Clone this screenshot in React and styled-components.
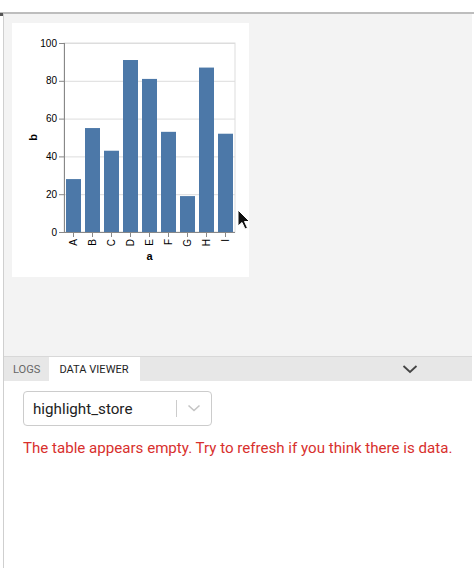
import React from "react";
import styled, { createGlobalStyle } from "styled-components";

const GlobalStyle = createGlobalStyle`
  html, body { margin: 0; padding: 0; background: #fff; }
  body { font-family: Roboto, "Liberation Sans", sans-serif; }
  #root { height: 568px; }
`;

const Page = styled.div`
  height: 568px;
  padding-top: 12px;
  box-sizing: border-box;
  display: flex;
  flex-direction: column;
  position: relative;
`;

const Frame = styled.div`
  flex: 1;
  display: flex;
  flex-direction: column;
  border-top: 2px solid #bdbdbd;
  min-height: 0;
`;

const Corner = styled.div`
  position: absolute;
  left: 0;
  top: 13px;
  width: 3px;
  height: 3px;
  background: #555;
`;

const Body = styled.div`
  flex: 1;
  display: flex;
  flex-direction: column;
  margin: 0 2px 0 3px;
  border-left: 1px solid #cfcfcf;
`;

const Stage = styled.div`
  height: 343px;
  background: #f3f3f3;
  padding: 9px 0 0 8px;
  box-sizing: border-box;
  border-bottom: 1px solid #d8d8d8;
`;

const ChartCard = styled.div`
  position: relative;
  width: 237px;
  height: 254px;
  background: #fff;
`;

const Cursor = styled.svg`
  position: absolute;
  left: 225px;
  top: 186px;
`;

const TabBar = styled.div`
  height: 24px;
  background: #e7e7e7;
  display: flex;
  align-items: stretch;
`;

const Tab = styled.div`
  display: flex;
  align-items: center;
  padding: 0 ${(p) => (p.$active ? "11px 0 10px" : "9px 0 9px")};
  font-size: 11.1px;
  text-transform: uppercase;
  color: ${(p) => (p.$active ? "#1f1f1f" : "#666")};
  background: ${(p) => (p.$active ? "#fff" : "transparent")};
`;

const Collapse = styled.div`
  margin-left: auto;
  padding-right: 54px;
  display: flex;
  align-items: center;
`;

const Content = styled.div`
  flex: 1;
  background: #fff;
  padding: 10px 19px;
`;

const Select = styled.div`
  width: 189px;
  height: 35px;
  box-sizing: border-box;
  border: 1px solid #cccccc;
  border-radius: 4px;
  display: flex;
  align-items: center;
`;

const SelectValue = styled.div`
  flex: 1;
  padding-left: 9px;
  font-size: 15.2px;
  color: #222;
`;

const Separator = styled.div`
  width: 1px;
  align-self: stretch;
  margin: 8px 0;
  background: #cccccc;
`;

const Indicator = styled.div`
  width: 34px;
  display: flex;
  align-items: center;
  justify-content: center;
`;

const ErrorText = styled.div`
  margin-top: 13px;
  font-size: 15.1px;
  white-space: nowrap;
  color: #d8302d;
`;

const data = [
  ["A", 28], ["B", 55], ["C", 43], ["D", 91], ["E", 81],
  ["F", 53], ["G", 19], ["H", 87], ["I", 52],
];

const PX = 52;
const PY = 20;
const PW = 171;
const PH = 189;

const BarChart = () => {
  const y = (v) => PY + PH - (v / 100) * PH;
  return (
    <svg width="237" height="254" fontFamily="'Liberation Sans', Arial, sans-serif">
      <rect x={PX} y={PY} width={PW} height={PH} fill="none" stroke="#ddd" />
      {[0, 20, 40, 60, 80, 100].map((t) => (
        <g key={t}>
          <line x1={PX} x2={PX + PW} y1={y(t) + 0.5} y2={y(t) + 0.5} stroke="#ddd" />
          <line x1={PX - 5} x2={PX} y1={y(t) + 0.5} y2={y(t) + 0.5} stroke="#888" />
          <text x={PX - 7} y={y(t) + 3.5} fontSize="10" textAnchor="end" fill="#000">
            {t}
          </text>
        </g>
      ))}
      {data.map(([k, v], i) => (
        <rect key={k} x={PX + 2 + i * 19} y={y(v)} width="15" height={PY + PH - y(v)} fill="#4c78a8" />
      ))}
      <line x1={PX + 0.5} x2={PX + 0.5} y1={PY} y2={PY + PH} stroke="#888" />
      <line x1={PX} x2={PX + PW} y1={PY + PH + 0.5} y2={PY + PH + 0.5} stroke="#888" />
      {data.map(([k], i) => {
        const cx = PX + 9.5 + i * 19;
        return (
          <g key={k}>
            <line x1={cx} x2={cx} y1={PY + PH} y2={PY + PH + 5} stroke="#888" />
            <text
              transform={`translate(${cx + 3.5},${PY + PH + 7}) rotate(-90)`}
              fontSize="10"
              textAnchor="end"
              fill="#000"
            >
              {k}
            </text>
          </g>
        );
      })}
      <text x={PX + PW / 2} y={237} fontSize="11" fontWeight="bold" textAnchor="middle">
        a
      </text>
      <text transform={`translate(25,${PY + PH / 2}) rotate(-90)`} fontSize="11" fontWeight="bold" textAnchor="middle">
        b
      </text>
    </svg>
  );
};

export default function App() {
  return (
    <>
      <GlobalStyle />
      <Page>
        <Corner />
        <Frame>
          <Body>
            <Stage>
              <ChartCard>
                <BarChart />
                <Cursor width="14" height="22" viewBox="0 0 14 22">
                  <path d="M1 1 L1 17 L5 13.5 L8 20 L10.5 19 L7.5 12.5 L12.5 12.5 Z" fill="#111" stroke="#fff" strokeWidth="1" />
                </Cursor>
              </ChartCard>
            </Stage>
            <TabBar>
              <Tab>Logs</Tab>
              <Tab $active>Data Viewer</Tab>
              <Collapse>
                <svg width="16" height="10" viewBox="0 0 16 10">
                  <path d="M1.5 2 L8 8 L14.5 2" fill="none" stroke="#444" strokeWidth="1.8" />
                </svg>
              </Collapse>
            </TabBar>
            <Content>
              <Select>
                <SelectValue>highlight_store</SelectValue>
                <Separator />
                <Indicator>
                  <svg width="14" height="9" viewBox="0 0 14 9">
                    <path d="M1.5 1.5 L7 6.5 L12.5 1.5" fill="none" stroke="#c4c4c4" strokeWidth="1.6" />
                  </svg>
                </Indicator>
              </Select>
              <ErrorText>The table appears empty. Try to refresh if you think there is data.</ErrorText>
            </Content>
          </Body>
        </Frame>
      </Page>
    </>
  );
}
